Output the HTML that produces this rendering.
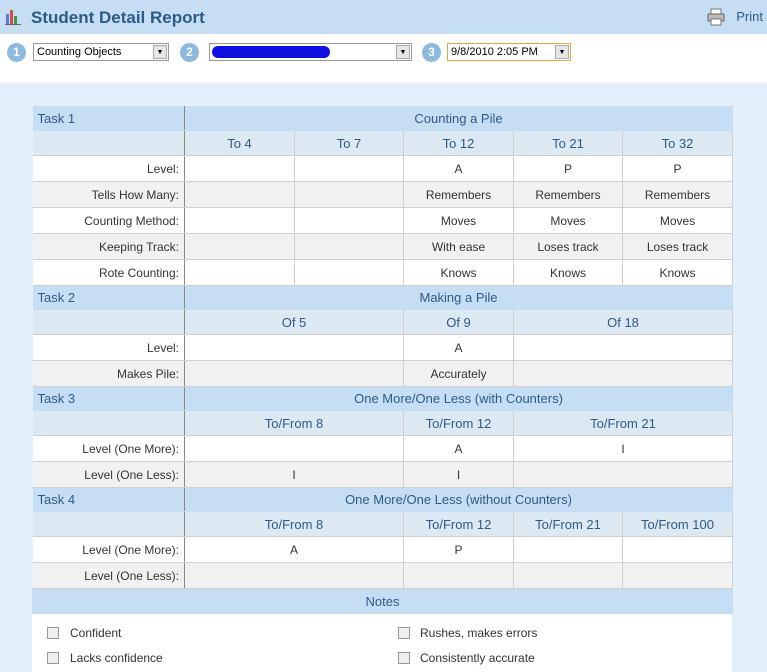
<!DOCTYPE html>
<html><head><style>
body{margin:0;width:767px;height:672px;overflow:hidden;background:#e3f0fc;font-family:"Liberation Sans",sans-serif;position:relative}
.hdr{position:absolute;left:0;top:0;width:767px;height:34px;background:#c6def4}
.title{position:absolute;left:31px;top:8px;font-size:17px;font-weight:bold;color:#2d5b86}
.print{position:absolute;right:4px;top:9px;font-size:13px;color:#2d5b86}
.bar{position:absolute;left:0;top:34px;width:767px;height:49px;background:#fff}
.num{position:absolute;top:43px;width:19px;height:19px;border-radius:50%;background:#8db9dd;color:#fff;font-size:12px;font-weight:bold;text-align:center;line-height:19px}
.sel{position:absolute;top:43px;height:16px;border:1px solid #999;background:#fff;font-size:11px;line-height:16px;padding-left:3px;box-sizing:content-box}
.sel .ar{position:absolute;right:1px;top:1px;width:14px;height:14px;background:#e6e6e6;border:1px solid #aaa;box-sizing:border-box;font-size:7px;text-align:center;line-height:13px}
table{position:absolute;left:32px;top:106px;border-collapse:collapse;width:700px;table-layout:fixed;font-size:12px;color:#333}
td{padding:0;border:1px solid #cfcfcf;text-align:center;overflow:hidden;white-space:nowrap}
td.l{text-align:right;padding-right:5px;border-left:none}
tr.t td{background:#c6def4;color:#2d5b86;font-size:13px;height:23px;border-color:#c6def4}
tr.t td.l{text-align:left;padding-left:5px;border-right:1px solid #888}
tr.s td{background:#dce8f2;color:#2d5b86;font-size:13px;height:24px}
tr.s td.l{border-right:1px solid #888}
tr.w td{background:#fff;height:25px}
tr.g td{background:#f1f1f1;height:25px}
tr.w td.l,tr.g td.l{border-right:1px solid #888}
.notes{position:absolute;left:32px;top:614px;width:700px;height:58px;background:#fff;font-size:12px;color:#333}
.cb{position:absolute;width:10px;height:10px;border:1px solid #999;background:#eee}
.nt{position:absolute}
</style></head><body>
<div class="hdr">
<svg style="position:absolute;left:5px;top:10px" width="16" height="15"><rect x="1" y="4" width="3" height="11" fill="#5a7bd6"/><rect x="5" y="0" width="3" height="15" fill="#d84a4a"/><rect x="9" y="6" width="3" height="9" fill="#3d9a45"/><rect x="0" y="14" width="16" height="1" fill="#666"/></svg>
<div class="title">Student Detail Report</div>
<svg style="position:absolute;left:707px;top:8px" width="18" height="18"><rect x="4" y="1" width="10" height="6" fill="#fff" stroke="#777"/><rect x="1" y="6" width="16" height="7" fill="#bbb" stroke="#666"/><rect x="4" y="11" width="10" height="6" fill="#fff" stroke="#777"/></svg>
<div class="print">Print</div>
</div>
<div class="bar"></div>
<div class="num" style="left:7px">1</div>
<div class="sel" style="left:33px;width:131px">Counting Objects<div class="ar">▼</div></div>
<div class="num" style="left:180px">2</div>
<div class="sel" style="left:209px;width:198px"><div style="position:absolute;left:2px;top:2px;width:118px;height:12px;background:#1010e0;border-radius:6px"></div><div class="ar">▼</div></div>
<div class="num" style="left:422px">3</div>
<div class="sel" style="left:447px;width:119px;border-color:#e0a640">9/8/2010 2:05 PM<div class="ar">▼</div></div>
<table>
<colgroup><col style="width:152px"><col style="width:110px"><col style="width:109px"><col style="width:110px"><col style="width:109px"><col style="width:110px"></colgroup>
<tr class="t"><td class="l">Task 1</td><td colspan="5">Counting a Pile</td></tr>
<tr class="s"><td class="l"></td><td>To 4</td><td>To 7</td><td>To 12</td><td>To 21</td><td>To 32</td></tr>
<tr class="w"><td class="l">Level:</td><td></td><td></td><td>A</td><td>P</td><td>P</td></tr>
<tr class="g"><td class="l">Tells How Many:</td><td></td><td></td><td>Remembers</td><td>Remembers</td><td>Remembers</td></tr>
<tr class="w"><td class="l">Counting Method:</td><td></td><td></td><td>Moves</td><td>Moves</td><td>Moves</td></tr>
<tr class="g"><td class="l">Keeping Track:</td><td></td><td></td><td>With ease</td><td>Loses track</td><td>Loses track</td></tr>
<tr class="w"><td class="l">Rote Counting:</td><td></td><td></td><td>Knows</td><td>Knows</td><td>Knows</td></tr>
<tr class="t"><td class="l">Task 2</td><td colspan="5">Making a Pile</td></tr>
<tr class="s"><td class="l"></td><td colspan="2">Of 5</td><td>Of 9</td><td colspan="2">Of 18</td></tr>
<tr class="w"><td class="l">Level:</td><td colspan="2"></td><td>A</td><td colspan="2"></td></tr>
<tr class="g"><td class="l">Makes Pile:</td><td colspan="2"></td><td>Accurately</td><td colspan="2"></td></tr>
<tr class="t"><td class="l">Task 3</td><td colspan="5">One More/One Less (with Counters)</td></tr>
<tr class="s"><td class="l"></td><td colspan="2">To/From 8</td><td>To/From 12</td><td colspan="2">To/From 21</td></tr>
<tr class="w"><td class="l">Level (One More):</td><td colspan="2"></td><td>A</td><td colspan="2">I</td></tr>
<tr class="g"><td class="l">Level (One Less):</td><td colspan="2">I</td><td>I</td><td colspan="2"></td></tr>
<tr class="t"><td class="l">Task 4</td><td colspan="5">One More/One Less (without Counters)</td></tr>
<tr class="s"><td class="l"></td><td colspan="2">To/From 8</td><td>To/From 12</td><td>To/From 21</td><td>To/From 100</td></tr>
<tr class="w"><td class="l">Level (One More):</td><td colspan="2">A</td><td>P</td><td></td><td></td></tr>
<tr class="g"><td class="l">Level (One Less):</td><td colspan="2"></td><td></td><td></td><td></td></tr>
<tr class="t"><td colspan="6" style="border-right-color:#c6def4;height:24px">Notes</td></tr>
</table>
<div class="notes">
<div class="cb" style="left:15px;top:13px"></div><div class="nt" style="left:38px;top:12px">Confident</div>
<div class="cb" style="left:15px;top:38px"></div><div class="nt" style="left:38px;top:37px">Lacks confidence</div>
<div class="cb" style="left:366px;top:13px"></div><div class="nt" style="left:388px;top:12px">Rushes, makes errors</div>
<div class="cb" style="left:366px;top:38px"></div><div class="nt" style="left:388px;top:37px">Consistently accurate</div>
</div>
</body></html>
